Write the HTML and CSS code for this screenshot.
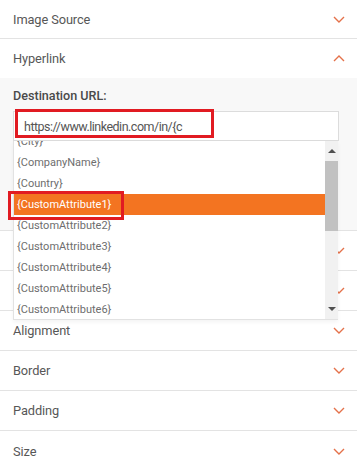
FILE: index.html
```html
<!DOCTYPE html>
<html>
<head>
<meta charset="utf-8">
<link rel="stylesheet" href="styles.css">
</head>
<body>
<div class="panel">
  <div class="row first">
    <span class="title">Image Source</span>
    <svg class="chev" width="12" height="7" viewBox="0 0 12 7"><polyline points="1,1 6,6 11,1"/></svg>
  </div>
  <div class="row open">
    <span class="title">Hyperlink</span>
    <svg class="chev" width="12" height="7" viewBox="0 0 12 7"><polyline points="1,6 6,1 11,6"/></svg>
  </div>
  <div class="content">
    <div class="label">Destination URL:</div>
    <div class="field">
      <div class="input">https://www.linkedin.com/in/{c</div>
      <div class="mark mark-input"></div>
      <div class="dropdown">
        <div class="list">
          <ul class="items">
            <li>{City}</li>
            <li>{CompanyName}</li>
            <li>{Country}</li>
            <li class="active">{CustomAttribute1}</li>
            <li>{CustomAttribute2}</li>
            <li>{CustomAttribute3}</li>
            <li>{CustomAttribute4}</li>
            <li>{CustomAttribute5}</li>
            <li>{CustomAttribute6}</li>
          </ul>
        </div>
        <div class="scrollbar">
          <div class="arrow up"></div>
          <div class="track"><div class="thumb"></div></div>
          <div class="arrow down"></div>
        </div>
        <div class="mark mark-item"></div>
      </div>
    </div>
  </div>
  <div class="row">
    <span class="title"></span>
    <svg class="chev" width="12" height="7" viewBox="0 0 12 7"><polyline points="1,1 6,6 11,1"/></svg>
  </div>
  <div class="row">
    <span class="title"></span>
    <svg class="chev" width="12" height="7" viewBox="0 0 12 7"><polyline points="1,1 6,6 11,1"/></svg>
  </div>
  <div class="row">
    <span class="title">Alignment</span>
    <svg class="chev" width="12" height="7" viewBox="0 0 12 7"><polyline points="1,1 6,6 11,1"/></svg>
  </div>
  <div class="row">
    <span class="title">Border</span>
    <svg class="chev" width="12" height="7" viewBox="0 0 12 7"><polyline points="1,1 6,6 11,1"/></svg>
  </div>
  <div class="row">
    <span class="title">Padding</span>
    <svg class="chev" width="12" height="7" viewBox="0 0 12 7"><polyline points="1,1 6,6 11,1"/></svg>
  </div>
  <div class="row last">
    <span class="title">Size</span>
    <svg class="chev" width="12" height="7" viewBox="0 0 12 7"><polyline points="1,1 6,6 11,1"/></svg>
  </div>
</div>
</body>
</html>
```
FILE: styles.css
```css
html, body {
  margin: 0;
  padding: 0;
  background: #ffffff;
}
body {
  font-family: Roboto, "Liberation Sans", sans-serif;
  width: 357px;
  height: 471px;
  overflow: hidden;
}
.panel {
  display: flex;
  flex-direction: column;
}
.row {
  border-bottom: 1px solid #e3e3e3;
  display: flex;
  align-items: center;
  justify-content: space-between;
  padding: 0 12px 0 13px;
  background: #fff;
  box-sizing: border-box;
  height: 40px;
}
.row.first {
  height: 39px;
}
.row.open {
  border-bottom: none;
  height: 39px;
}
.row.last {
  border-bottom: none;
}
.title {
  font-size: 12.8px;
  color: #575757;
  letter-spacing: -0.1px;
}
.chev {
  display: block;
}
.chev polyline {
  fill: none;
  stroke: #e4714a;
  stroke-width: 1.4;
}
.content {
  background: #f8f8f8;
  border-bottom: 1px solid #e3e3e3;
  padding: 10px 18px 0 13px;
  box-sizing: border-box;
  height: 153px;
}
.label {
  font-size: 12.6px;
  font-weight: 500;
  color: #4a4a4a;
  line-height: 16px;
}
.field {
  position: relative;
  margin-top: 7px;
}
.input {
  height: 30px;
  box-sizing: border-box;
  border: 1px solid #dcdcdc;
  background: #fff;
  font-size: 12.5px;
  letter-spacing: -0.5px;
  color: #555;
  padding-left: 10px;
  display: flex;
  align-items: center;
}
.mark {
  position: absolute;
  border: 3px solid #e11b22;
  box-sizing: border-box;
}
.mark-input {
  left: 2px;
  top: -2px;
  width: 199px;
  height: 29px;
}
.dropdown {
  position: absolute;
  left: 0;
  top: 30px;
  width: 325px;
  height: 179px;
  background: #fff;
  border-left: 1px solid #e2e2e2;
  border-bottom: 1px solid #e2e2e2;
  box-sizing: border-box;
  display: flex;
  box-shadow: 0 2px 4px rgba(0,0,0,0.05);
}
.list {
  flex: 1;
  overflow: hidden;
}
.items {
  list-style: none;
  margin: -10px 0 0 0;
  padding: 0;
}
.items li {
  height: 21px;
  line-height: 21px;
  font-size: 11px;
  color: #6e6e6e;
  padding-left: 3px;
}
.items li.active {
  background: #f37421;
  color: #fff;
}
.scrollbar {
  width: 13px;
  background: #f1f1f1;
  display: flex;
  flex-direction: column;
}
.arrow {
  height: 20px;
  display: flex;
  align-items: center;
  justify-content: center;
}
.arrow.up::before {
  content: "";
  border-left: 4px solid transparent;
  border-right: 4px solid transparent;
  border-bottom: 4px solid #505050;
}
.arrow.down::before {
  content: "";
  border-left: 4px solid transparent;
  border-right: 4px solid transparent;
  border-top: 4px solid #505050;
}
.track {
  flex: 1;
}
.thumb {
  height: 70px;
  background: #c1c1c1;
}
.mark-item {
  left: -6px;
  top: 50px;
  width: 116px;
  height: 29px;
}
```
